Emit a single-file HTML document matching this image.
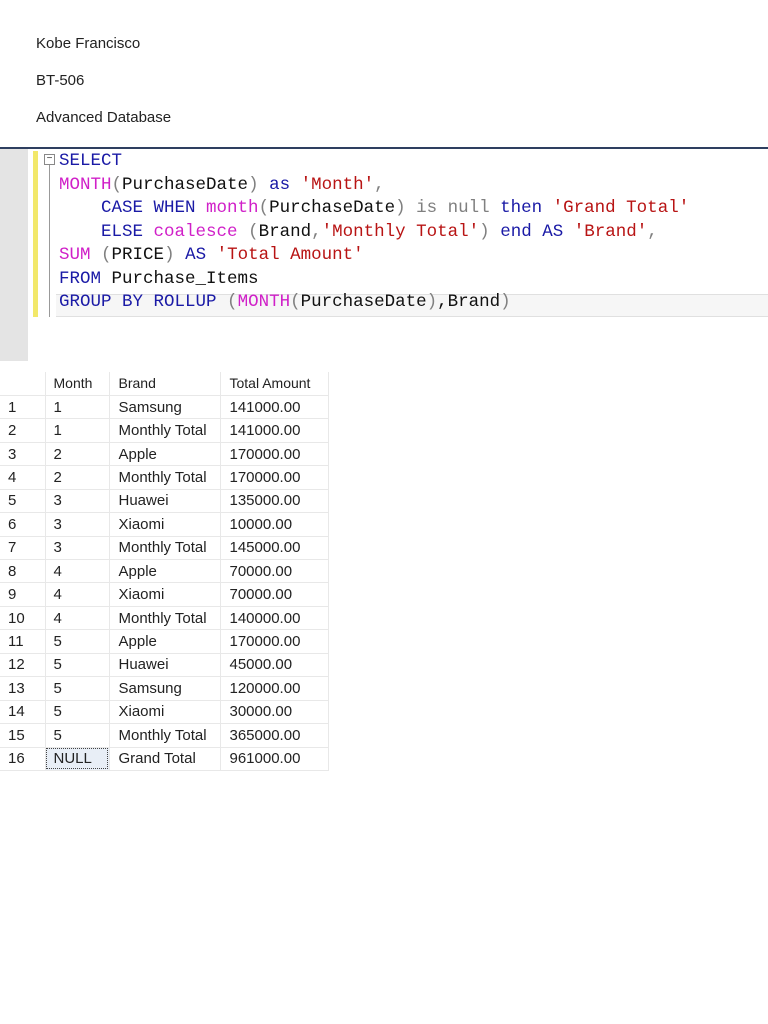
<!DOCTYPE html>
<html><head><meta charset="utf-8"><style>
body{margin:0;width:768px;height:1024px;background:#fff;position:relative;overflow:hidden;font-family:"Liberation Sans",sans-serif}
.t{position:absolute;left:36px;font-size:15px;color:#222}
.code{position:absolute;left:0;top:147px;width:768px;height:212px;background:#fff;border-top:2px solid #2e3f60}
.gut{position:absolute;left:0;top:0;width:28px;height:212px;background:#e4e4e4}
.yb{position:absolute;left:33px;top:2px;width:5px;height:166px;background:#f2e86a}
.ln{position:absolute;left:59px;font-family:"Liberation Mono",monospace;font-size:17.5px;white-space:pre;line-height:23.5px;color:#111}
.k{color:#1a1aa6}.f{color:#d020c8}.s{color:#b81414}.g{color:#808080}
.hl{position:absolute;left:56px;top:145px;width:712px;height:21px;border-top:1px solid #e0e0e0;border-bottom:1px solid #e0e0e0;background:#f6f6f6}
.box{position:absolute;left:44px;top:5px;width:9px;height:9px;border:1px solid #888;font-size:10px;line-height:8px;text-align:center;color:#333}
.vl{position:absolute;left:49px;top:16px;width:1px;height:152px;background:#999}
table{position:absolute;left:0;top:372px;border-collapse:collapse;font-size:15px;color:#222}
tr{height:23.45px}
td{padding:0;border-right:1px solid #e8e8e8;border-bottom:1px solid #e8e8e8;vertical-align:middle}
td:nth-child(1){width:45px;padding-left:8px;box-sizing:border-box}
td:nth-child(2){width:64px;padding-left:8px;box-sizing:border-box}
td:nth-child(3){width:111px;padding-left:9px;box-sizing:border-box}
td:nth-child(4){width:108px;padding-left:9px;box-sizing:border-box}
tr:first-child td{font-size:14px}
.nl{outline:1px dotted #444;outline-offset:-2px;background:#e8eef6}
</style></head><body>
<div class="t" style="top:35px">Kobe Francisco</div>
<div class="t" style="top:72px">BT-506</div>
<div class="t" style="top:109px">Advanced Database</div>
<div class="code">
<div class="gut"></div><div class="yb"></div><div class="hl"></div>
<div class="box">−</div><div class="vl"></div>
<div class="ln" style="top:1px"><span class="k">SELECT</span></div>
<div class="ln" style="top:24.5px"><span class="f">MONTH</span><span class="g">(</span>PurchaseDate<span class="g">)</span> <span class="k">as</span> <span class="s">'Month'</span><span class="g">,</span></div>
<div class="ln" style="top:48px">    <span class="k">CASE WHEN</span> <span class="f">month</span><span class="g">(</span>PurchaseDate<span class="g">) is null</span> <span class="k">then</span> <span class="s">'Grand Total'</span></div>
<div class="ln" style="top:71.5px">    <span class="k">ELSE</span> <span class="f">coalesce</span> <span class="g">(</span>Brand<span class="g">,</span><span class="s">'Monthly Total'</span><span class="g">)</span> <span class="k">end AS</span> <span class="s">'Brand'</span><span class="g">,</span></div>
<div class="ln" style="top:95px"><span class="f">SUM</span> <span class="g">(</span>PRICE<span class="g">)</span> <span class="k">AS</span> <span class="s">'Total Amount'</span></div>
<div class="ln" style="top:118.5px"><span class="k">FROM</span> Purchase_Items</div>
<div class="ln" style="top:142px"><span class="k">GROUP BY ROLLUP</span> <span class="g">(</span><span class="f">MONTH</span><span class="g">(</span>PurchaseDate<span class="g">)</span>,Brand<span class="g">)</span></div>
</div>
<table>
<tr><td></td><td>Month</td><td>Brand</td><td>Total Amount</td></tr>
<tr><td>1</td><td>1</td><td>Samsung</td><td>141000.00</td></tr>
<tr><td>2</td><td>1</td><td>Monthly Total</td><td>141000.00</td></tr>
<tr><td>3</td><td>2</td><td>Apple</td><td>170000.00</td></tr>
<tr><td>4</td><td>2</td><td>Monthly Total</td><td>170000.00</td></tr>
<tr><td>5</td><td>3</td><td>Huawei</td><td>135000.00</td></tr>
<tr><td>6</td><td>3</td><td>Xiaomi</td><td>10000.00</td></tr>
<tr><td>7</td><td>3</td><td>Monthly Total</td><td>145000.00</td></tr>
<tr><td>8</td><td>4</td><td>Apple</td><td>70000.00</td></tr>
<tr><td>9</td><td>4</td><td>Xiaomi</td><td>70000.00</td></tr>
<tr><td>10</td><td>4</td><td>Monthly Total</td><td>140000.00</td></tr>
<tr><td>11</td><td>5</td><td>Apple</td><td>170000.00</td></tr>
<tr><td>12</td><td>5</td><td>Huawei</td><td>45000.00</td></tr>
<tr><td>13</td><td>5</td><td>Samsung</td><td>120000.00</td></tr>
<tr><td>14</td><td>5</td><td>Xiaomi</td><td>30000.00</td></tr>
<tr><td>15</td><td>5</td><td>Monthly Total</td><td>365000.00</td></tr>
<tr><td>16</td><td class="nl">NULL</td><td>Grand Total</td><td>961000.00</td></tr>
</table>
</body></html>
